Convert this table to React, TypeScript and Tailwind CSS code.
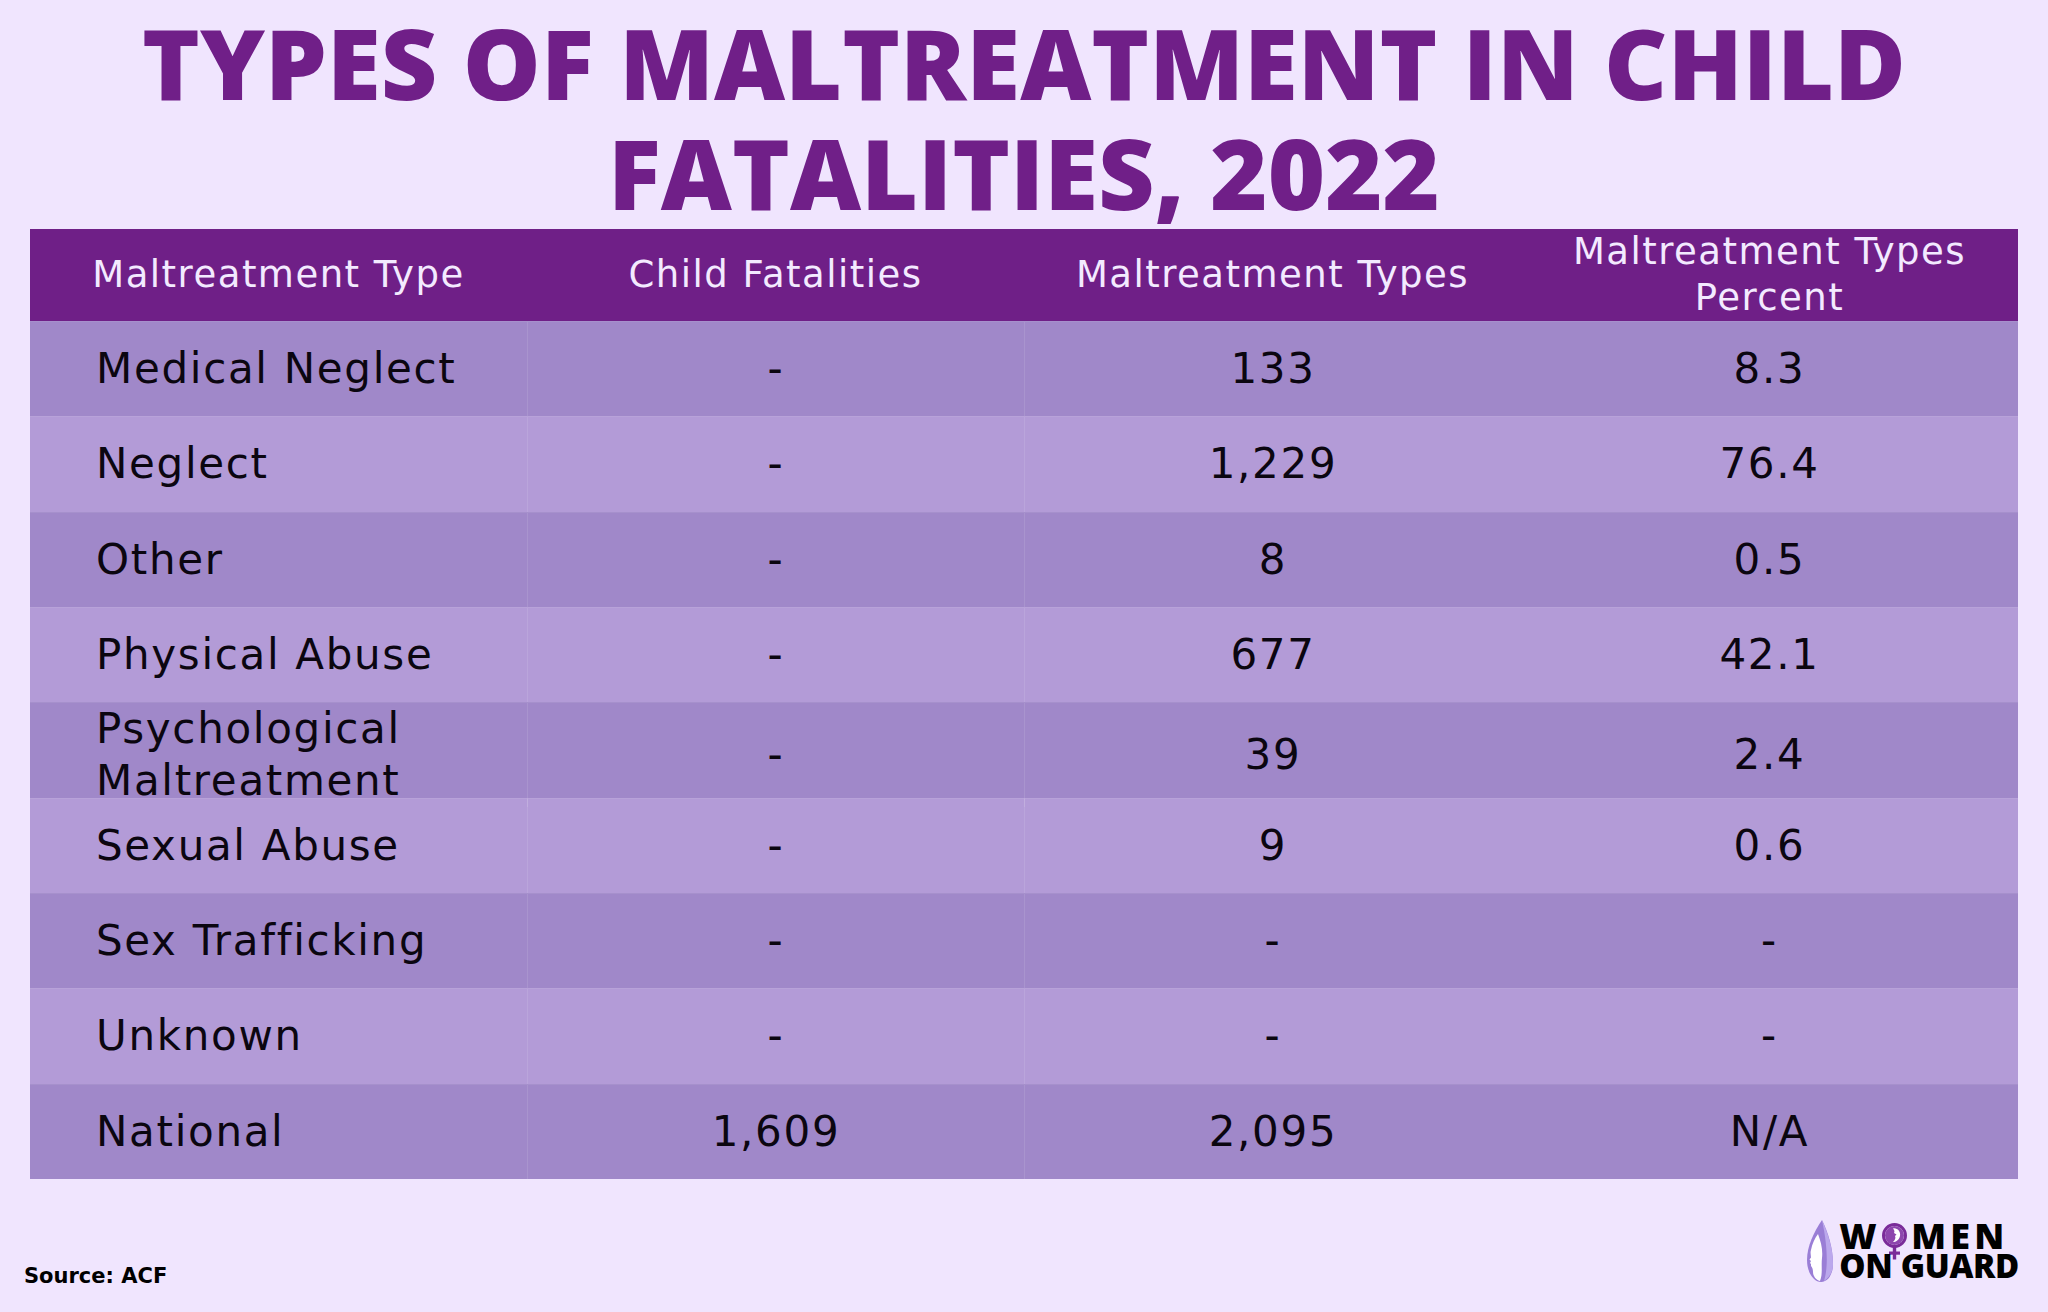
import React from "react"

type Row = { type: string; fatalities: string; types: string; percent: string }

const rows: Row[] = [
  { type: "Medical Neglect", fatalities: "-", types: "133", percent: "8.3" },
  { type: "Neglect", fatalities: "-", types: "1,229", percent: "76.4" },
  { type: "Other", fatalities: "-", types: "8", percent: "0.5" },
  { type: "Physical Abuse", fatalities: "-", types: "677", percent: "42.1" },
  { type: "Psychological Maltreatment", fatalities: "-", types: "39", percent: "2.4" },
  { type: "Sexual Abuse", fatalities: "-", types: "9", percent: "0.6" },
  { type: "Sex Trafficking", fatalities: "-", types: "-", percent: "-" },
  { type: "Unknown", fatalities: "-", types: "-", percent: "-" },
  { type: "National", fatalities: "1,609", types: "2,095", percent: "N/A" },
]

const headers = ["Maltreatment Type", "Child Fatalities", "Maltreatment Types", "Maltreatment Types Percent"]

function Leaf() {
  return (
    <svg width="28" height="62" viewBox="0 0 28 62" className="shrink-0">
      <path d="M16 0 C 8 12, 1 26, 1 40 C 1 53, 8 62, 15 62 C 22 62, 27 54, 27 44 C 27 28, 22 12, 16 0 Z" fill="#9a7ed6" />
      <path d="M16 0 C 22 14, 27 28, 27 44 C 27 52, 23 58, 18 61 C 22 48, 22 28, 16 0 Z" fill="#bba8ec" />
      <path
        d="M12 14 C 15 22, 17 30, 16 38 C 15 46, 17 54, 14 61 C 10 60, 7 56, 7 52 C 7 49, 6 47, 5 46 L 5 44 L 4 43 L 5 41 L 3.5 39.5 L 5 37.5 C 5 35, 4 33, 5 30 C 6 24, 9 18, 12 14 Z"
        fill="#ffffff"
      />
    </svg>
  )
}

function FemaleO() {
  return (
    <svg width="25" height="38" viewBox="0 0 25 38" className="mr-[4px] mt-[2px] shrink-0">
      <circle cx="12.5" cy="12.5" r="11" fill="none" stroke="#7a2b99" strokeWidth="3" />
      <circle cx="12.5" cy="12.5" r="9.5" fill="#8d45ad" />
      <path d="M11 5.5 C 15 4.5, 19 8.5, 18 13 C 17 17, 14 19, 11 19 C 13 17, 14 15, 13 13 L 14.5 11.5 L 12 10 C 13 8.5, 12 6.5, 11 5.5 Z" fill="#ffffff" />
      <rect x="10.8" y="23.5" width="3.4" height="13" fill="#7a2b99" />
      <rect x="7" y="28.5" width="11" height="3.2" fill="#7a2b99" />
    </svg>
  )
}

export default function App() {
  return (
    <div className="flex h-[1312px] w-[2048px] flex-col bg-[#f0e5fe]">
      <h1 className="pt-[7px] text-center font-['Open_Sans',sans-serif] text-[98px] font-extrabold leading-[110px] text-[#701f88]">
        TYPES OF MALTREATMENT IN CHILD
        <br />
        FATALITIES, 2022
      </h1>

      <div className="mx-[30px] mt-[2px] font-['DejaVu_Sans',sans-serif]">
        <div className="grid h-[92px] grid-cols-4 bg-[#6f1f87] text-[37px] leading-[46px] tracking-[0.04em] text-[#f3eaff]">
          {headers.map((h) => (
            <div key={h} className="flex items-center justify-center px-[40px] text-center">
              {h}
            </div>
          ))}
        </div>
        {rows.map((r, i) => (
          <div
            key={r.type}
            className={`grid h-[95.33px] grid-cols-4 border-t border-[#ffffff12] text-[42px] leading-[52px] tracking-[0.04em] text-[#0b0610] ${
              i % 2 === 0 ? "bg-[#a088c9]" : "bg-[#b39bd7]"
            }`}
          >
            <div className="flex items-center pl-[66px] pr-[20px]">{r.type}</div>
            <div className="flex items-center justify-center border-l border-[#ffffff1a]">{r.fatalities}</div>
            <div className="flex items-center justify-center border-l border-[#ffffff1a]">{r.types}</div>
            <div className="flex items-center justify-center">{r.percent}</div>
          </div>
        ))}
      </div>

      <div className="mt-[41px] flex items-end justify-between pl-[24px] pr-[29px]">
        <span className="mb-[-5px] font-['DejaVu_Sans',sans-serif] text-[21px] font-bold leading-none text-black">
          Source: ACF
        </span>
        <div className="flex items-center gap-[5px]">
          <Leaf />
          <div className="flex flex-col font-['Open_Sans',sans-serif] font-extrabold text-black">
            <div className="flex h-[30px] items-start text-[36px] leading-[30px]">
              <span className="tracking-[0.15em]">W</span>
              <FemaleO />
              <span className="tracking-[0.12em]">MEN</span>
            </div>
            <div className="h-[30px] text-[33px] leading-[30px] tracking-[-0.01em]">ON GUARD</div>
          </div>
        </div>
      </div>
    </div>
  )
}
